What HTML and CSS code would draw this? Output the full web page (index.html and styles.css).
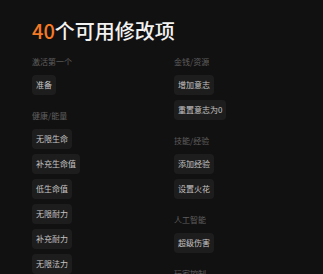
FILE: index.html
```html
<!DOCTYPE html>
<html>
<head>
  <meta charset="UTF-8">
  <meta name="viewport" content="width=device-width, initial-scale=1.0">
  <title>修改项</title>
  <link rel="stylesheet" href="styles.css">
</head>
<body>
  <div class="page">
    <h1 class="title"><span class="count">40</span>个可用修改项</h1>

    <div class="columns">
      <div class="column">
        <div class="section">
          <div class="section-label">激活第一个</div>
          <div class="option-list">
            <button class="option">准备</button>
          </div>
        </div>
        <div class="section">
          <div class="section-label">健康/能量</div>
          <div class="option-list">
            <button class="option">无限生命</button>
            <button class="option">补充生命值</button>
            <button class="option">低生命值</button>
            <button class="option">无限耐力</button>
            <button class="option">补充耐力</button>
            <button class="option">无限法力</button>
            <button class="option">补充法力</button>
          </div>
        </div>
      </div>

      <div class="column">
        <div class="section">
          <div class="section-label">金钱/资源</div>
          <div class="option-list">
            <button class="option">增加意志</button>
            <button class="option">重置意志为0</button>
          </div>
        </div>
        <div class="section">
          <div class="section-label">技能/经验</div>
          <div class="option-list">
            <button class="option">添加经验</button>
            <button class="option">设置火花</button>
          </div>
        </div>
        <div class="section">
          <div class="section-label">人工智能</div>
          <div class="option-list">
            <button class="option">超级伤害</button>
          </div>
        </div>
        <div class="section">
          <div class="section-label">玩家控制</div>
          <div class="option-list">
            <button class="option">无敌模式</button>
          </div>
        </div>
      </div>
    </div>
  </div>
</body>
</html>
```

FILE: styles.css
```css
* {
  margin: 0;
  padding: 0;
  box-sizing: border-box;
}

body {
  font-family: "Noto Sans CJK SC", "Noto Sans", sans-serif;
  background: #121111;
  color: #c4c4c4;
  height: 274px;
  overflow: hidden;
}

.page {
  padding: 17px 32px 0;
}

.title {
  font-size: 20px;
  line-height: 28px;
  font-weight: 500;
  color: #f2f2f2;
  margin-bottom: 11px;
}

.count {
  color: #f57a25;
}

.columns {
  display: grid;
  grid-template-columns: 1fr 1fr;
  column-gap: 25px;
}

.section {
  margin-bottom: 15px;
}

.section-label {
  font-size: 8px;
  line-height: 12px;
  color: #5f5f5f;
  margin-bottom: 7px;
}

.option-list {
  display: flex;
  flex-direction: column;
  align-items: flex-start;
  gap: 5px;
}

.option {
  height: 20px;
  padding: 0 4px;
  border: none;
  border-radius: 4px;
  background: #1e1d1d;
  color: #c4c4c4;
  font-family: inherit;
  font-size: 8px;
  line-height: 20px;
}
```
